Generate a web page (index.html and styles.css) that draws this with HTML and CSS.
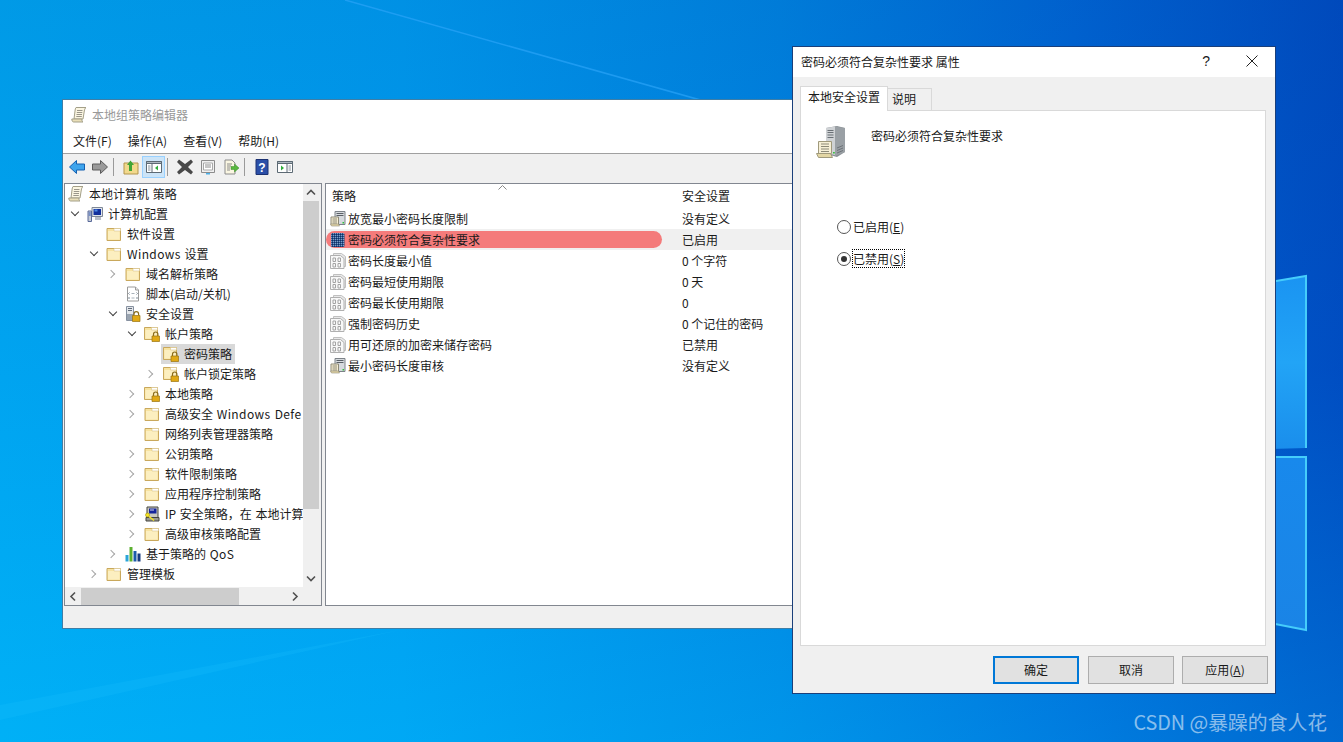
FILE: index.html
```html
<!DOCTYPE html>
<html>
<head>
	<title>本地组策略编辑器</title>
	<link rel="stylesheet" href="styles.css">
</head>
<body>
	<svg class="sprites" width="0" height="0">
		<symbol id="i-folder" viewBox="0 0 16 16">
			<path d="M1 2.500h13.500v12H1z" fill="#f7e3a1" stroke="#c9a85c"/>
			<path d="M2 5h11.500v8.500H2z" fill="#fcefc0"/>
			<path d="M8 2.500h6.500V5H8z" fill="#fff" stroke="#d8c58c" stroke-width=".6"/>
		</symbol>
		<symbol id="i-lock" viewBox="0 0 16 16">
			<path d="M.5 1.500h13v12H.5z" fill="#f7e3a1" stroke="#c9a85c"/>
			<path d="M1.500 4h11v8.500h-11z" fill="#fcefc0"/>
			<path d="M7.500 1.500h6V4h-6z" fill="#fff" stroke="#d8c58c" stroke-width=".6"/>
			<path d="M9.500 10V8.200a2.200 2.200 0 0 1 4.400 0V10" fill="none" stroke="#8a6d1c" stroke-width="1.200"/>
			<path d="M8 10h7.500v5.500H8z" fill="#e0a916" stroke="#9a7410" stroke-width=".7"/>
		</symbol>
		<symbol id="i-scroll" viewBox="0 0 16 16">
			<path d="M5 .5h10c-1 .8-1.400 1.800-1.700 3.500L12 12H3l1-8c.1-1.500.4-2.800 1-3.500z" fill="#fbf6e2" stroke="#a39f88"/>
			<path d="M6 3.500h5.500M5.800 5.500h5.500M5.500 7.500h5.500M5.300 9.500h5.500" stroke="#9a968a"/>
			<path d="M.8 12h10c0 1.500.5 2.500 1.200 3H2.500C1.500 15 .8 13.500.8 12z" fill="#eadfb8" stroke="#a39f88"/>
		</symbol>
		<symbol id="i-computer" viewBox="0 0 16 16">
			<path d="M5 1.500h10.500v9H5z" fill="#dfe4ec" stroke="#7f8896"/>
			<path d="M6.500 3h7.500v6H6.500z" fill="#12309c"/>
			<path d="M7.500 3.500h3v2h-3z" fill="#4d8ae6"/>
			<path d="M8 11h6v3H8z" fill="#b8bec8"/>
			<path d="M1 5h3.500v10.500H1z" fill="#c6ccd6" stroke="#5a6a9a"/>
			<path d="M1.800 7h2M1.800 9h2" stroke="#2b56b8"/>
		</symbol>
		<symbol id="i-script" viewBox="0 0 16 16">
			<path d="M2.500 1h8l3 3v11h-11z" fill="#fff" stroke="#9a9a9a"/>
			<path d="M10.500 1v3h3" fill="#e8e8e8" stroke="#9a9a9a"/>
			<path d="M4.500 6.500l-1 1 1 1M11.500 6.500l1 1-1 1M4.500 11l-1 1 1 1M11.500 11l1 1-1 1" fill="none" stroke="#7d8a96"/>
			<path d="M6.500 7.500h3M6.500 12h3" stroke="#a9b2ba"/>
		</symbol>
		<symbol id="i-secure" viewBox="0 0 16 16">
			<path d="M1.500 .5h7v14h-7z" fill="#e3e6ea" stroke="#8791a0"/>
			<path d="M3 2.500h4M3 4.500h4" stroke="#606a78"/>
			<path d="M2 8h6v6H2z" fill="#9aa4b0"/>
			<path d="M9 9.500V8a2.300 2.300 0 0 1 4.600 0v1.500" fill="none" stroke="#8a6d1c" stroke-width="1.200"/>
			<path d="M7.500 9.500h7.500v6H7.500z" fill="#e0a916" stroke="#9a7410" stroke-width=".7"/>
		</symbol>
		<symbol id="i-ipsec" viewBox="0 0 16 16">
			<path d="M3 1h11v10.500H3z" fill="#c8c8c0" stroke="#44443e"/>
			<path d="M5 2.500h7.500v5H5z" fill="#14249c"/>
			<path d="M6 4h4" stroke="#d8d8f0"/>
			<path d="M2 11.500h13v3.500H2z" fill="#9a9a94" stroke="#44443e"/>
			<circle cx="3.500" cy="9" r="2" fill="#f6e522" stroke="#a08e10" stroke-width=".6"/>
			<path d="M5 10.500l5 4" stroke="#f6e522" stroke-width="1.600"/>
		</symbol>
		<symbol id="i-qos" viewBox="0 0 16 16">
			<path d="M.5 9h3v6.500h-3z" fill="#2aa5d8"/>
			<path d="M4.500 1h3v14.500h-3z" fill="#5cb030"/>
			<path d="M8.500 5h3v10.500h-3z" fill="#1c5caa"/>
			<path d="M12.500 7.500h3v8h-3z" fill="#163a80"/>
		</symbol>
		<symbol id="i-policy" viewBox="0 0 16 16">
			<path d="M5 .5h10v13H5z" fill="#d6dade" stroke="#7c8288"/>
			<path d="M6.500 2.500h7M6.500 4.500h7" stroke="#5a6066"/>
			<rect x="12.500" y="11" width="1.500" height="1.500" fill="#2fc23a"/>
			<path d="M1 6h7.500v7.500H1z" fill="#f5edd2" stroke="#8d8a76"/>
			<path d="M2.500 8h4.500M2.500 10h4.500M2.500 12h4.500" stroke="#8d8a76"/>
			<path d="M.5 13h8l1 2H1.500z" fill="#e6d8a8" stroke="#8d8a76" stroke-width=".6"/>
		</symbol>
		<symbol id="i-number" viewBox="0 0 16 16">
			<path d="M3.500 .5h8l4 3v10h-12z" fill="#e8e8e8" stroke="#c0c0c0"/>
			<path d="M.5 2.500h10l3.500 3v10H.5z" fill="#f8f8f8" stroke="#b0b0b0"/>
			<path d="M3 5h2.500v3.500H3zM8 5h2.500v3.500H8zM3 10.500h2.500V14H3zM8 10.500h2.500V14H8z" fill="none" stroke="#a4a4a4"/>
		</symbol>
		<symbol id="i-complex" viewBox="0 0 16 16">
			<pattern id="dither" width="2" height="2" patternUnits="userSpaceOnUse">
				<rect width="2" height="2" fill="#28558f"/>
				<rect width="1" height="1" fill="#132f60"/>
				<rect x="1" y="1" width="1" height="1" fill="#7f9ec4"/>
			</pattern>
			<rect x="1" y="1" width="13.500" height="14" rx="1.500" fill="url(#dither)"/>
		</symbol>
		<symbol id="i-server" viewBox="0 0 30 32">
			<path d="M10 2l11-2 8 2v24l-8 5-11-3z" fill="#8a9095"/>
			<path d="M10 2l9-1.500V29l-9-2z" fill="#cfd2d5"/>
			<path d="M19 .5L29 2v24l-10 4z" fill="#9aa0a5"/>
			<path d="M11.500 4.500h6M11.500 6.500h6M11.500 9h6M11.500 11.500h6" stroke="#6a7076" stroke-width="1.100"/>
			<path d="M21 22l6-2.500M21 24.500l6-2.500M21 27l6-2.500" stroke="#6c7278"/>
			<rect x="17" y="26" width="1.800" height="1.500" fill="#39c13f"/>
			<path d="M2.500 15.500h13v12h-13z" fill="#f6efd6" stroke="#a09a7c"/>
			<path d="M5 18h8M5 20.500h8M5 23h8M5 25.500h8" stroke="#8c8a78"/>
			<path d="M.5 27.500h14l2 4H2.500z" fill="#e3d6a4" stroke="#a09a7c"/>
		</symbol>
	</svg>

	<div class="desktop">
		<svg class="wallpaper" viewBox="0 0 1343 742" preserveAspectRatio="none">
			<defs>
				<linearGradient id="pane-top" x1="0" y1="0" x2="0" y2="1">
					<stop offset="0" stop-color="#1a94f2"/>
					<stop offset=".5" stop-color="#22a4f6"/>
					<stop offset="1" stop-color="#1a8eec"/>
				</linearGradient>
				<linearGradient id="pane-low" x1="0" y1="0" x2="0" y2="1">
					<stop offset="0" stop-color="#1889ec"/>
					<stop offset="1" stop-color="#1a84e6"/>
				</linearGradient>
			</defs>
			<path d="M345 0L800 128" stroke="#2aa4f8" stroke-width="1.500" opacity=".7"/>
			<path d="M0 705L400 630 0 720z" fill="#1cc4ff" opacity=".2"/>
			<path d="M1270 282L1306 276V448L1270 449z" fill="url(#pane-top)"/>
			<path d="M1270 282L1306 276V448" fill="none" stroke="#45cdfb" stroke-width="2"/>
			<path d="M1270 457L1306 457V630L1270 623z" fill="url(#pane-low)"/>
			<path d="M1270 457H1306V630L1270 623" fill="none" stroke="#45cdfb" stroke-width="2"/>
		</svg>

		<div class="window editor">
			<div class="titlebar">
				<svg class="icon"><use href="#i-scroll"/></svg>
				<span class="title-text">本地组策略编辑器</span>
			</div>
			<div class="menubar">
				<span>文件(F)</span>
				<span>操作(A)</span>
				<span>查看(V)</span>
				<span>帮助(H)</span>
			</div>
			<div class="toolbar">
				<button class="tool">
					<svg viewBox="0 0 16 16"><path d="M.5 8L7.500 1.500V5h8v6h-8v3.500z" fill="#3ea4ec" stroke="#1560b0"/></svg>
				</button>
				<button class="tool">
					<svg viewBox="0 0 16 16"><path d="M15.500 8L8.500 1.500V5h-8v6h8v3.500z" fill="#9a9a9a" stroke="#5c5c5c"/></svg>
				</button>
				<i class="tool-sep"></i>
				<button class="tool">
					<svg viewBox="0 0 16 16"><path d="M1 4h14v11H1z" fill="#f2d98c" stroke="#b3954c"/><path d="M6 12V6H4l3.500-4.500L11 6H9v6z" fill="#3fa535"/></svg>
				</button>
				<button class="tool active">
					<svg viewBox="0 0 16 16"><path d="M.5 2.500h15v11H.5z" fill="#fff" stroke="#5d6a74"/><path d="M.5 2.500h15v2H.5z" fill="#aeb8c0" stroke="#5d6a74"/><path d="M6 4.500v9" stroke="#5d6a74"/><path d="M2 7h2.500M2 9h2.500M2 11h2.500" stroke="#8a959e"/><path d="M12 6.500v5L9 9z" fill="#2fae3c"/></svg>
				</button>
				<i class="tool-sep"></i>
				<button class="tool">
					<svg viewBox="0 0 16 16"><path d="M2 .5L8 5l6-4.500L16 3l-5 5 5 5-2 2.500L8 11l-6 4.500L0 13l5-5-5-5z" fill="#484848"/></svg>
				</button>
				<button class="tool">
					<svg viewBox="0 0 16 16"><path d="M1.500 1.500h13v12h-13z" fill="#f0f0f0" stroke="#8c8c8c"/><path d="M3.500 4h9v7h-9z" fill="#fff" stroke="#a8a8a8"/><path d="M5 6h6M5 8h6" stroke="#8c8c8c"/><path d="M6 14h4v1.500H6z" fill="#4cb0e8"/></svg>
				</button>
				<button class="tool">
					<svg viewBox="0 0 16 16"><path d="M2 1h7l3 3v11H2z" fill="#faf6e2" stroke="#8c8c8c"/><path d="M4 5h5M4 7h4M4 9h3M4 11h3" stroke="#8c8c8c"/><path d="M8 7.500h3.500V5L16 9l-4.500 4v-2.500H8z" fill="#58b83e" stroke="#3c8a28" stroke-width=".5"/></svg>
				</button>
				<i class="tool-sep"></i>
				<button class="tool">
					<svg viewBox="0 0 16 16"><path d="M2 .5h12v15H2z" fill="#2b4fa8" stroke="#1c3272"/><text x="8" y="12.500" class="help-mark">?</text></svg>
				</button>
				<button class="tool">
					<svg viewBox="0 0 16 16"><path d="M.5 2.500h15v11H.5z" fill="#fff" stroke="#5d6a74"/><path d="M.5 2.500h15v2H.5z" fill="#aeb8c0" stroke="#5d6a74"/><path d="M10 4.500v9" stroke="#5d6a74"/><path d="M11.500 7H14M11.500 9H14M11.500 11H14" stroke="#8a959e"/><path d="M4 6.500v5L7 9z" fill="#2fae3c"/></svg>
				</button>
			</div>

			<div class="panes">
				<div class="tree-pane">
					<div class="tree-main">
						<div class="tree">
							<div class="node lv0"><svg class="icon"><use href="#i-scroll"/></svg><span>本地计算机 策略</span></div>
							<div class="node lv1"><b class="caret open"></b><svg class="icon"><use href="#i-computer"/></svg><span>计算机配置</span></div>
							<div class="node lv2"><b class="caret none"></b><svg class="icon"><use href="#i-folder"/></svg><span>软件设置</span></div>
							<div class="node lv2"><b class="caret open"></b><svg class="icon"><use href="#i-folder"/></svg><span><em>Windows</em> 设置</span></div>
							<div class="node lv3"><b class="caret"></b><svg class="icon"><use href="#i-folder"/></svg><span>域名解析策略</span></div>
							<div class="node lv3"><b class="caret none"></b><svg class="icon"><use href="#i-script"/></svg><span>脚本(启动/关机)</span></div>
							<div class="node lv3"><b class="caret open"></b><svg class="icon"><use href="#i-secure"/></svg><span>安全设置</span></div>
							<div class="node lv4"><b class="caret open"></b><svg class="icon"><use href="#i-lock"/></svg><span>帐户策略</span></div>
							<div class="node lv5"><b class="caret none"></b><div class="selected"><svg class="icon"><use href="#i-lock"/></svg><span>密码策略</span></div></div>
							<div class="node lv5"><b class="caret"></b><svg class="icon"><use href="#i-lock"/></svg><span>帐户锁定策略</span></div>
							<div class="node lv4"><b class="caret"></b><svg class="icon"><use href="#i-lock"/></svg><span>本地策略</span></div>
							<div class="node lv4"><b class="caret"></b><svg class="icon"><use href="#i-folder"/></svg><span>高级安全 <em>Windows Defe</em></span></div>
							<div class="node lv4"><b class="caret none"></b><svg class="icon"><use href="#i-folder"/></svg><span>网络列表管理器策略</span></div>
							<div class="node lv4"><b class="caret"></b><svg class="icon"><use href="#i-folder"/></svg><span>公钥策略</span></div>
							<div class="node lv4"><b class="caret"></b><svg class="icon"><use href="#i-folder"/></svg><span>软件限制策略</span></div>
							<div class="node lv4"><b class="caret"></b><svg class="icon"><use href="#i-folder"/></svg><span>应用程序控制策略</span></div>
							<div class="node lv4"><b class="caret"></b><svg class="icon"><use href="#i-ipsec"/></svg><span>IP 安全策略，在 本地计算</span></div>
							<div class="node lv4"><b class="caret"></b><svg class="icon"><use href="#i-folder"/></svg><span>高级审核策略配置</span></div>
							<div class="node lv3"><b class="caret"></b><svg class="icon"><use href="#i-qos"/></svg><span>基于策略的 <em>QoS</em></span></div>
							<div class="node lv2"><b class="caret"></b><svg class="icon"><use href="#i-folder"/></svg><span>管理模板</span></div>
						</div>
						<div class="vscroll">
							<svg viewBox="0 0 16 16" class="arrow"><path d="M4 10l4-4 4 4" /></svg>
							<div class="vtrack"><div class="vthumb"></div></div>
							<svg viewBox="0 0 16 16" class="arrow"><path d="M4 6l4 4 4-4" /></svg>
						</div>
					</div>
					<div class="hscroll">
						<svg viewBox="0 0 16 16" class="arrow"><path d="M10 4L6 8l4 4" /></svg>
						<div class="htrack"><div class="hthumb"></div></div>
						<svg viewBox="0 0 16 16" class="arrow"><path d="M6 4l4 4-4 4" /></svg>
					</div>
				</div>

				<div class="list-pane">
					<div class="list-head">
						<div class="col-name">策略</div>
						<div class="col-value">安全设置</div>
						<svg class="sort-mark" viewBox="0 0 9 5"><path d="M.5 4.500l4-4 4 4"/></svg>
					</div>
					<div class="list-row"><div class="col-name"><svg class="icon"><use href="#i-policy"/></svg>放宽最小密码长度限制</div><div class="col-value">没有定义</div></div>
					<div class="list-row current">
						<i class="red-mark"></i>
						<div class="col-name"><svg class="icon"><use href="#i-complex"/></svg>密码必须符合复杂性要求</div>
						<div class="col-value">已启用</div>
					</div>
					<div class="list-row"><div class="col-name"><svg class="icon"><use href="#i-number"/></svg>密码长度最小值</div><div class="col-value">0 个字符</div></div>
					<div class="list-row"><div class="col-name"><svg class="icon"><use href="#i-number"/></svg>密码最短使用期限</div><div class="col-value">0 天</div></div>
					<div class="list-row"><div class="col-name"><svg class="icon"><use href="#i-number"/></svg>密码最长使用期限</div><div class="col-value">0</div></div>
					<div class="list-row"><div class="col-name"><svg class="icon"><use href="#i-number"/></svg>强制密码历史</div><div class="col-value">0 个记住的密码</div></div>
					<div class="list-row"><div class="col-name"><svg class="icon"><use href="#i-number"/></svg>用可还原的加密来储存密码</div><div class="col-value">已禁用</div></div>
					<div class="list-row"><div class="col-name"><svg class="icon"><use href="#i-policy"/></svg>最小密码长度审核</div><div class="col-value">没有定义</div></div>
				</div>
			</div>
			<div class="statusbar"></div>
		</div>

		<div class="window dialog">
			<div class="dialog-title">
				<span class="dialog-caption">密码必须符合复杂性要求 属性</span>
				<span class="help-btn">?</span>
				<svg class="close-btn" viewBox="0 0 12 12"><path d="M.5.5l11 11M11.500.5l-11 11"/></svg>
			</div>
			<div class="dialog-body">
				<div class="tabs">
					<div class="tab on">本地安全设置</div>
					<div class="tab">说明</div>
				</div>
				<div class="tab-panel">
					<div class="policy-head">
						<svg class="big-icon"><use href="#i-server"/></svg>
						<span>密码必须符合复杂性要求</span>
					</div>
					<div class="radio-row"><i class="radio"></i><span>已启用(<u>E</u>)</span></div>
					<div class="radio-row"><i class="radio checked"></i><span class="focused">已禁用(<u>S</u>)</span></div>
				</div>
				<div class="dialog-buttons">
					<div class="btn primary">确定</div>
					<div class="btn">取消</div>
					<div class="btn">应用(<u>A</u>)</div>
				</div>
			</div>
		</div>

		<div class="watermark">CSDN @暴躁的食人花</div>
	</div>
</body>
</html>
```

FILE: styles.css
```css
* {
	box-sizing: border-box;
}

body {
	margin: 0;
	font-family: "Noto Sans CJK SC", "Liberation Sans", sans-serif;
	font-size: 12px;
	color: #1a1a1a;
	overflow: hidden;
}

.sprites {
	position: absolute;
}

.desktop {
	position: relative;
	width: 1343px;
	height: 742px;
	overflow: hidden;
	background:
		linear-gradient(180deg, rgba(0, 30, 110, 0.1) 0%, rgba(0, 60, 140, 0.04) 50%, rgba(0, 210, 255, 0.2) 100%),
		linear-gradient(90deg, #00a8f4 0%, #009ef2 30%, #0086e4 58%, #0068d8 80%, #004ec4 100%);
}

.wallpaper {
	position: absolute;
	inset: 0;
	width: 100%;
	height: 100%;
}

.window {
	position: absolute;
	background: #f0f0f0;
}

.icon {
	width: 16px;
	height: 16px;
	flex: none;
}

/* editor window */
.editor {
	left: 62px;
	top: 99px;
	width: 731px;
	height: 530px;
	display: flex;
	flex-direction: column;
	border: 1px solid #3f7ea6;
	border-right: 0;
}

.titlebar {
	height: 26px;
	background: #fff;
	display: flex;
	align-items: center;
	gap: 5px;
	padding: 3px 0 0 8px;
	color: #999;
}

.menubar {
	height: 28px;
	background: #fff;
	display: flex;
	align-items: center;
	gap: 16px;
	padding: 1px 0 0 10px;
	border-bottom: 1px solid #a0a0a0;
}

.toolbar {
	height: 25px;
	background: #f0f0f0;
	display: flex;
	align-items: center;
	padding-left: 2px;
}

.tool {
	width: 23px;
	height: 22px;
	border: 1px solid transparent;
	background: none;
	padding: 2px;
	display: flex;
	align-items: center;
	justify-content: center;
}

.tool svg {
	width: 16px;
	height: 16px;
	flex: none;
}

.tool.active {
	background: #cce4f7;
	border-color: #99d1ff;
}

.help-mark {
	fill: #fff;
	font-family: "Liberation Sans", sans-serif;
	font-weight: bold;
	font-size: 12px;
	text-anchor: middle;
}

.tool-sep {
	width: 1px;
	height: 18px;
	background: #9a9a9a;
	margin: 0 5px 0 2px;
}

.panes {
	flex: 1;
	display: flex;
	gap: 3px;
	padding: 4px 0 0 1px;
	min-height: 0;
}

/* left tree */
.tree-pane {
	width: 258px;
	height: 423px;
	border: 1px solid #828790;
	background: #f0f0f0;
	display: flex;
	flex-direction: column;
}

.tree-main {
	flex: 1;
	display: flex;
	min-height: 0;
}

.tree {
	flex: 1;
	overflow: hidden;
	background: #fff;
}

.node {
	height: 20px;
	display: flex;
	align-items: center;
	white-space: nowrap;
}

.node span {
	margin-left: 5px;
	line-height: 18px;
	word-spacing: 1px;
}

.node em {
	font-style: normal;
	letter-spacing: 0.4px;
}

.lv0 { padding-left: 3px; }
.lv1 { padding-left: 4px; }
.lv2 { padding-left: 23px; }
.lv3 { padding-left: 42px; }
.lv4 { padding-left: 61px; }
.lv5 { padding-left: 80px; }

.caret {
	width: 13px;
	height: 20px;
	margin-right: 5px;
	flex: none;
	position: relative;
}

.caret::after {
	content: "";
	position: absolute;
	left: 1px;
	top: 7px;
	width: 5px;
	height: 5px;
	border-top: 1.5px solid #a6a6a6;
	border-right: 1.5px solid #a6a6a6;
	transform: rotate(45deg);
}

.caret.open::after {
	left: 3px;
	top: 5px;
	border-color: #404040;
	transform: rotate(135deg);
}

.caret.none::after {
	display: none;
}

.selected {
	display: flex;
	align-items: center;
	height: 20px;
	margin-left: -2px;
	padding: 0 3px 0 2px;
	background: #d9d9d9;
}

.vscroll {
	width: 16px;
	margin-right: 2px;
	background: #f0f0f0;
	display: flex;
	flex-direction: column;
}

.vtrack {
	flex: 1;
}

.vthumb {
	height: 308px;
	background: #cdcdcd;
}

.hscroll {
	height: 18px;
	background: #f0f0f0;
	display: flex;
	padding: 1px 18px 0 0;
}

.htrack {
	flex: 1;
}

.hthumb {
	height: 100%;
	width: 158px;
	background: #cdcdcd;
}

.arrow {
	width: 16px;
	height: 17px;
	flex: none;
	fill: none;
	stroke: #505050;
	stroke-width: 1.6;
}

/* right list */
.list-pane {
	flex: 1;
	height: 423px;
	border: 1px solid #828790;
	border-right: 0;
	background: #fff;
	position: relative;
}

.list-head {
	height: 24px;
	display: flex;
	align-items: center;
	padding-bottom: 1px;
}

.sort-mark {
	position: absolute;
	left: 172px;
	top: 1px;
	width: 9px;
	height: 5px;
	fill: none;
	stroke: #888;
}

.list-row {
	height: 21px;
	display: flex;
	align-items: center;
	position: relative;
}

.list-row.current {
	background: #f0f0f0;
}

.col-name {
	width: 350px;
	padding-left: 4px;
	display: flex;
	align-items: center;
	gap: 2px;
	position: relative;
	white-space: nowrap;
}

.list-head .col-name {
	padding-left: 6px;
}

.col-value {
	padding-left: 6px;
	white-space: nowrap;
	position: relative;
}

.red-mark {
	position: absolute;
	left: 0;
	top: 2px;
	width: 336px;
	height: 17px;
	border-radius: 9px;
	background: #f47b7b;
}

/* property dialog */
.dialog {
	left: 792px;
	top: 46px;
	width: 484px;
	height: 648px;
	border: 1px solid #1a3f7a;
	display: flex;
	flex-direction: column;
}

.dialog-title {
	height: 30px;
	background: #fff;
	display: flex;
	align-items: center;
	padding: 0 17px 2px 8px;
	flex: none;
}

.dialog-caption {
	flex: 1;
}

.help-btn {
	font-family: "Liberation Sans", sans-serif;
	font-size: 14px;
	margin-right: 36px;
}

.close-btn {
	width: 12px;
	height: 12px;
	fill: none;
	stroke: #222;
}

.dialog-body {
	flex: 1;
	display: flex;
	flex-direction: column;
	padding: 10px 9px 9px 7px;
	min-height: 0;
}

.tabs {
	display: flex;
	align-items: flex-end;
	height: 23px;
	flex: none;
}

.tab {
	height: 22px;
	padding: 0 4px;
	line-height: 20px;
	border: 1px solid #d9d9d9;
	border-bottom: 0;
	margin-left: -1px;
	background: #f0f0f0;
	width: 45px;
}

.tab.on {
	height: 25px;
	line-height: 20px;
	margin-left: 0;
	width: 88px;
	background: #fff;
	position: relative;
	margin-bottom: -1px;
	z-index: 1;
	padding-left: 7px;
}

.tab-panel {
	flex: 1;
	background: #fff;
	border: 1px solid #d9d9d9;
	padding: 14px 0 0 36px;
	min-height: 0;
}

.policy-head {
	display: flex;
	height: 85px;
	margin-left: -21px;
}

.policy-head span {
	margin: 2px 0 0 25px;
	line-height: 18px;
}

.big-icon {
	width: 30px;
	height: 32px;
	flex: none;
	margin-top: 1px;
}

.radio-row {
	height: 32px;
	display: flex;
	align-items: center;
	gap: 2px;
}

.radio {
	width: 14px;
	height: 14px;
	border: 1px solid #555;
	border-radius: 50%;
	background: #fff;
	position: relative;
	margin-top: 2px;
}

.radio.checked::after {
	content: "";
	position: absolute;
	left: 3px;
	top: 3px;
	width: 6px;
	height: 6px;
	border-radius: 50%;
	background: #333;
}

.focused {
	outline: 1px dotted #000;
}

.dialog-buttons {
	display: flex;
	justify-content: flex-end;
	gap: 8px;
	padding-top: 10px;
	margin-right: -2px;
	flex: none;
}

.btn {
	width: 86px;
	height: 28px;
	border: 1px solid #adadad;
	background: #e1e1e1;
	text-align: center;
	line-height: 26px;
}

.btn.primary {
	border: 2px solid #0078d7;
	line-height: 24px;
	margin-right: 1px;
}

.watermark {
	position: absolute;
	right: 16px;
	bottom: 8px;
	font-size: 19.8px;
	line-height: 24px;
	color: rgba(255, 255, 255, 0.55);
}
```
